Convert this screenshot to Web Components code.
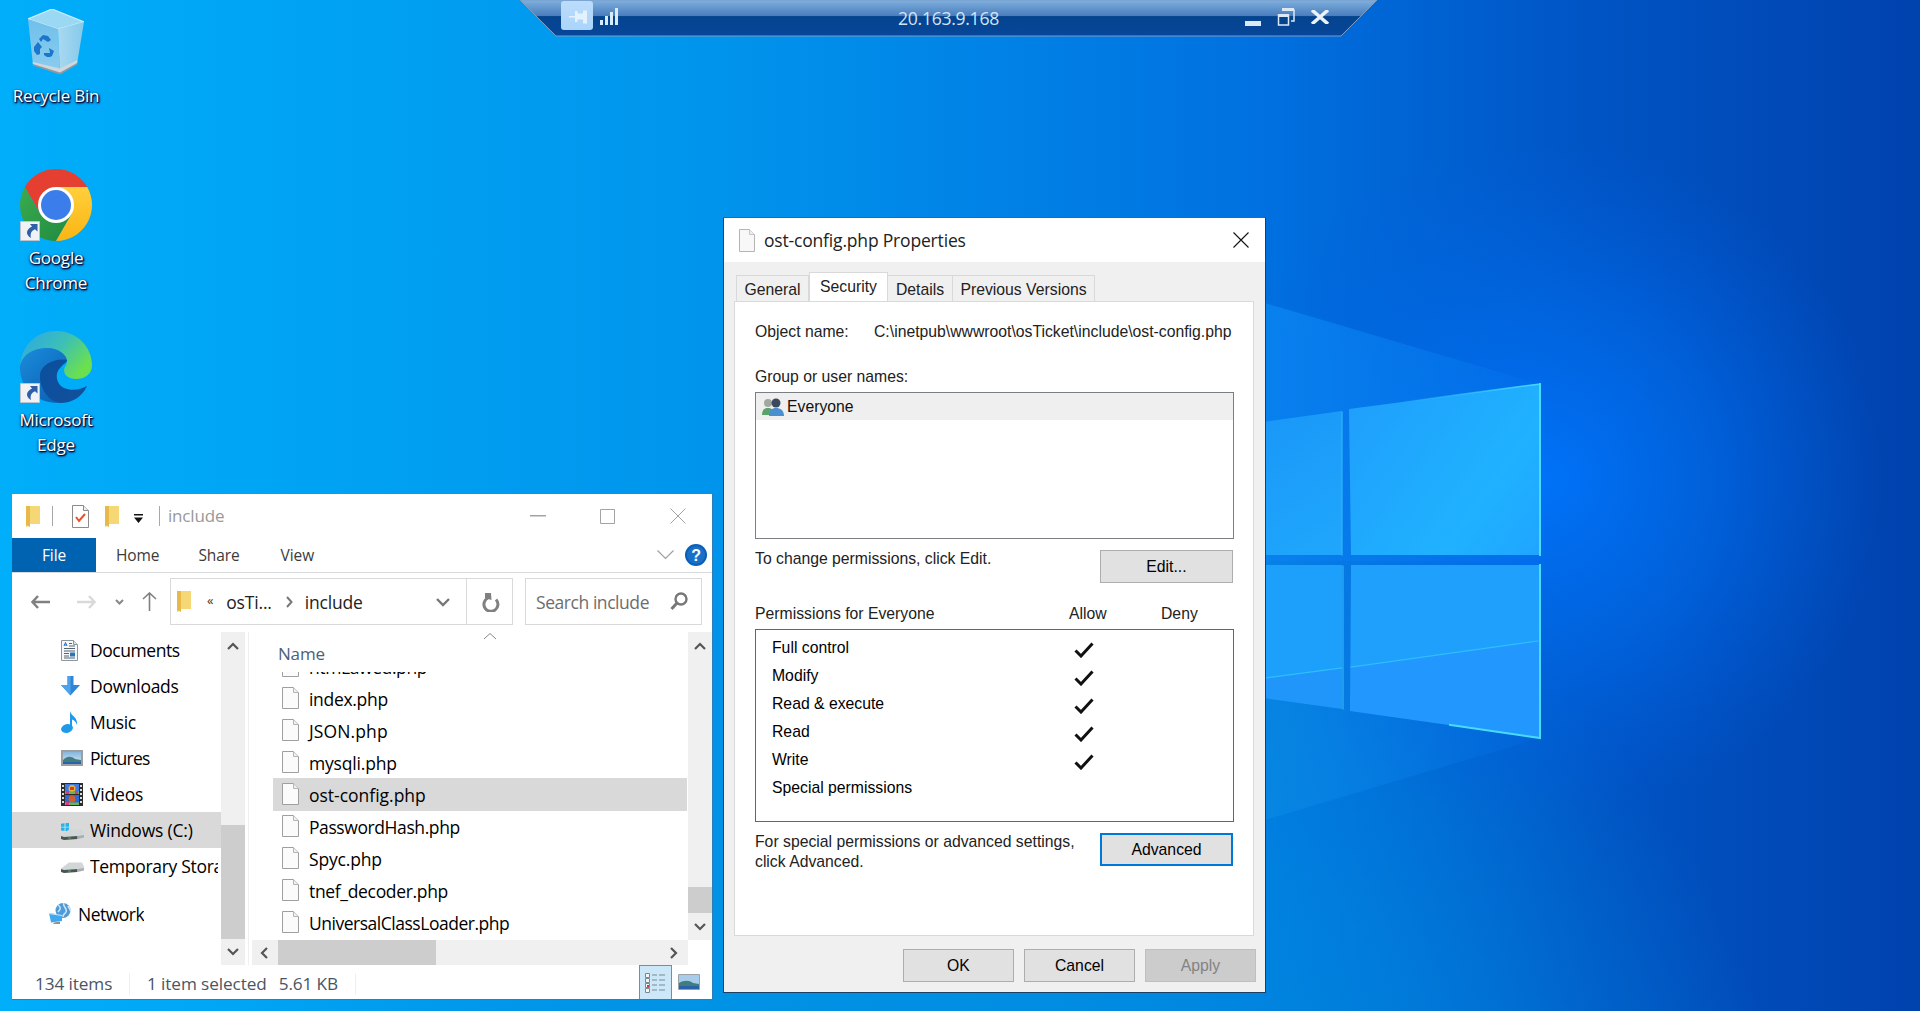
<!DOCTYPE html>
<html><head><meta charset="utf-8"><title>Remote desktop</title>
<style>
html,body{margin:0;padding:0;width:1920px;height:1011px;overflow:hidden;background:#0078d7}
</style></head><body>
<win-desktop>
  <desk-icons slot="icons">
    <desk-icon style="--mt:9px;--lm:8px;--ih:66px">
      <svg slot="icon" width="56" height="66" viewBox="0 0 56 66">
        <defs>
          <linearGradient id="rbl" x1="0" y1="0" x2="0" y2="1"><stop offset="0" stop-color="#6fc0ec"/><stop offset="1" stop-color="#8ccdee"/></linearGradient>
          <linearGradient id="rbr" x1="0" y1="0" x2="1" y2="0"><stop offset="0" stop-color="#a9d9f0"/><stop offset="1" stop-color="#85c9ec"/></linearGradient>
        </defs>
        <path d="M0 10L24 0L56 13L30 20Z" fill="#9ad8f3" stroke="#cdeffa" stroke-width="1.200"/>
        <path d="M0 10L30 20L32 65L5 56Z" fill="url(#rbl)"/>
        <path d="M30 20L56 13L49 55L32 65Z" fill="url(#rbr)"/>
        <path d="M4.700 53L32 59.500L49.300 51L49 55L32 65L5 56Z" fill="#cfd8de"/>
        <path d="M5 55L32 63.500L49 54L49 55.500L32 65.500L5 56.500Z" fill="#8f989e"/>
        <path d="M11 30L15 26L20 27L23 31L20 33L15 30L13 33ZM6 38L10 33L14 38L12 40L12 45L9 46L6 42ZM16 44L22 44L21 39L26 42L24 47L22 48L19 48L16 46Z" fill="#1c76cc"/>
      </svg>
      Recycle Bin
    </desk-icon>
    <desk-icon style="--mt:61px;--lm:4px;--ih:72px">
      <svg slot="icon" width="72" height="72" viewBox="0 0 72 72">
        <defs>
          <linearGradient id="cg" x1="0" y1="0" x2="1" y2="1"><stop offset="0" stop-color="#3cab4f"/><stop offset="1" stop-color="#1f8a3f"/></linearGradient>
          <linearGradient id="cy" x1="0" y1="0" x2="0" y2="1"><stop offset="0" stop-color="#ffcf3a"/><stop offset="1" stop-color="#fbb514"/></linearGradient>
        </defs>
        <path d="M67.180 18A36 36 0 0 0 4.820 18L20.410 45L36 18Z" fill="#e53f32"/>
        <path d="M4.820 18A36 36 0 0 0 36 72L51.590 45L20.410 45Z" fill="url(#cg)"/>
        <path d="M36 72A36 36 0 0 0 67.180 18L36 18L51.590 45Z" fill="url(#cy)"/>
        <circle cx="36" cy="36" r="18" fill="#fff"/><circle cx="36" cy="36" r="15" fill="#3b7dea"/>
      </svg>
      <shortcut-badge slot="icon"></shortcut-badge>
      Google<br>Chrome
    </desk-icon>
    <desk-icon style="--mt:36px;--lm:4px;--ih:72px">
      <svg slot="icon" width="72" height="72" viewBox="0 0 72 72">
        <defs>
          <linearGradient id="e1" x1="0" y1="0" x2="1" y2=".6"><stop offset="0" stop-color="#2ba6ea"/><stop offset=".55" stop-color="#3cc0b6"/><stop offset="1" stop-color="#6be04e"/></linearGradient>
          <linearGradient id="e2" x1="0" y1="0" x2=".8" y2="1"><stop offset="0" stop-color="#1b8cdc"/><stop offset="1" stop-color="#0b62b4"/></linearGradient>
          <linearGradient id="e3" x1="0" y1="0" x2="1" y2="1"><stop offset="0" stop-color="#0b4f9e"/><stop offset="1" stop-color="#11509c"/></linearGradient>
        </defs>
        <path d="M0 35C2 12 18 0 36 0C58 0 72 17 72 34C72 44 64 48 56 48C50 48 44 45 44 39C44 36 47 34 47 31C47 24 38 17 28 17C14 17 3 25 0 35Z" fill="url(#e1)"/>
        <path d="M0 35C3 22 15 17 28 17C38 17 47 24 47 30C38 28 28 33 26 42C24 53 28 66 38 72C16 72 -1 56 0 35Z" fill="url(#e2)"/>
        <path d="M47 29C36 27 21 33 20 44C19 58 30 71 40 72C52 72 62 66 67 55C60 59 52 60 44 57C36 53 34 42 41 36C43 33 47 32 47 29Z" fill="url(#e3)"/>
      </svg>
      <shortcut-badge slot="icon"></shortcut-badge>
      Microsoft<br>Edge
    </desk-icon>
  </desk-icons>

  <rdp-bar slot="bar">20.163.9.168</rdp-bar>

  <explorer-window slot="explorer">
    <nav-item slot="nav" style="--pad:49px;letter-spacing:-.45px">
      <svg slot="icon" width="17" height="21" viewBox="0 0 17 21"><path d="M.5.5h12l4 4v16H.5z" fill="#f6f8fb" stroke="#8d969f"/><path d="M12.500.5v4h4" fill="#dfe4e8" stroke="#8d969f"/><path d="M3 6l1.500-3.500L6 6M3.500 5h2" stroke="#1d6fc8" fill="none"/><path d="M8 3.500h3M8 6h6M3 8.500h11M3 11h11M3 13.500h5M3 16h5M3 18h11" stroke="#56656f"/><path d="M9 12.500h5v4H9z" fill="#2f72b5"/></svg>
      Documents
    </nav-item>
    <nav-item slot="nav" style="--pad:49px;letter-spacing:-.3px">
      <svg slot="icon" width="19" height="20" viewBox="0 0 19 20"><path d="M6.500 0h6v9H19l-9.500 10.500L0 9h6.500z" fill="#2f86d8"/><path d="M6.500 0h3v19.500L0 9h6.500z" fill="#4ea3ea"/></svg>
      Downloads
    </nav-item>
    <nav-item slot="nav" style="--pad:49px;letter-spacing:-.35px">
      <svg slot="icon" width="17" height="22" viewBox="0 0 17 22"><ellipse cx="6" cy="17.500" rx="6" ry="4.300" fill="#1d9aea" transform="rotate(-15 6 17.500)"/><path d="M9 17V0c1 5 8 6 7 14-1-3-2.500-4.500-5-5.500V17z" fill="#1d9aea"/></svg>
      Music
    </nav-item>
    <nav-item slot="nav" style="--pad:49px;letter-spacing:-.75px">
      <svg slot="icon" width="22" height="16" viewBox="0 0 22 16"><defs><linearGradient id="pc" x1="0" y1="0" x2="0" y2="1"><stop offset="0" stop-color="#7fb2dc"/><stop offset="1" stop-color="#e2edf5"/></linearGradient></defs><path d="M1 1h20v14H1z" fill="url(#pc)" stroke="#9aa0a5" stroke-width="2"/><path d="M2 10C6 6 10 6 14 9l6 1v3H2z" fill="#3f7d7e"/><path d="M2 12h18v2H2z" fill="#2a63a8"/></svg>
      Pictures
    </nav-item>
    <nav-item slot="nav" style="--pad:49px;letter-spacing:-.18px">
      <svg slot="icon" width="22" height="23" viewBox="0 0 22 23"><path d="M0 0h22v23H0z" fill="#2c2c2c"/><path d="M4 1h14v10H4z" fill="#3f7be0"/><path d="M4 12h14v10H4z" fill="#2b6ad6"/><circle cx="11" cy="5.500" r="3.500" fill="#e8b23a"/><path d="M9 4h4v3H9z" fill="#d33c2e"/><circle cx="11" cy="16" r="3.500" fill="#d35c2e"/><path d="M4 8.500h14V11H4zM4 19.500h14V22H4z" fill="#6fb356"/><path d="M5 8h3v3H5zM14 8h3v3h-3zM5 19h3v3H5z" fill="#d33c7e"/><path d="M1 2h2v2H1zM1 6h2v2H1zM1 10h2v2H1zM1 14h2v2H1zM1 18h2v2H1zM19 2h2v2h-2zM19 6h2v2h-2zM19 10h2v2h-2zM19 14h2v2h-2zM19 18h2v2h-2z" fill="#ddd"/></svg>
      Videos
    </nav-item>
    <nav-item slot="nav" selected style="--pad:49px;letter-spacing:-.18px">
      <svg slot="icon" style="margin-top:3px" width="23" height="17" viewBox="0 0 23 17"><path d="M0 .8l3.500-.5v3.500H0zM4.500.2 8-.3v4.100H4.500zM0 4.600h3.500v3.500L0 7.600zM4.500 4.600H8v4L4.500 8.100z" fill="#22b5ee"/><path d="M0 12.500l8-6h13l2 4v2L3 15 0 14z" fill="#d2d6d8"/><path d="M0 13l3 1 13.500-1v3L3 17l-3-1z" fill="#4d5256"/><path d="M16.500 13L23 12v2.500L16.500 16z" fill="#a9aeb2"/><path d="M7 14.500h3v1H7z" fill="#4cb04f"/></svg>
      Windows (C:)
    </nav-item>
    <nav-item slot="nav" style="--pad:49px;letter-spacing:-.3px">
      <svg slot="icon" style="margin-top:2px" width="23" height="11" viewBox="0 0 23 11"><path d="M0 6.500l8-6h13l2 4v2L3 9 0 8z" fill="#d2d6d8"/><path d="M0 7l3 1 13.500-1v3L3 11l-3-1z" fill="#4d5256"/><path d="M16.500 7L23 6v2.500L16.500 10z" fill="#a9aeb2"/><path d="M7 8.500h3v1H7z" fill="#4cb04f"/></svg>
      Temporary Storage (D:)
    </nav-item>
    <nav-item slot="nav" style="--pad:37px;--mt:12px;letter-spacing:-.5px">
      <svg slot="icon" width="22" height="22" viewBox="0 0 22 22"><circle cx="14" cy="7.500" r="7.500" fill="#4f9bd8"/><path d="M9 2c3 2 3 4 0 7M15 0c-2 3 4 6 2 9-1 2-3 2-3 5M19 3c1 3 3 3 2 5" fill="none" stroke="#cfe6f6" stroke-width="1.500"/><path d="M0 10l13 2v6L2 19.500z" fill="#42a8ee"/><path d="M0 10l13 2v1L0 11z" fill="#cfe7f7"/><path d="M5 19.500l6-1v2.500H4z" fill="#8d9499"/></svg>
      Network
    </nav-item>
    <file-row slot="files" style="letter-spacing:-.4px">htmLawed.php</file-row>
    <file-row slot="files" style="letter-spacing:-.31px">index.php</file-row>
    <file-row slot="files" style="letter-spacing:.12px">JSON.php</file-row>
    <file-row slot="files" style="letter-spacing:-.18px">mysqli.php</file-row>
    <file-row slot="files" selected style="letter-spacing:-.01px">ost-config.php</file-row>
    <file-row slot="files" style="letter-spacing:-.41px">PasswordHash.php</file-row>
    <file-row slot="files" style="letter-spacing:-.18px">Spyc.php</file-row>
    <file-row slot="files" style="letter-spacing:-.33px">tnef_decoder.php</file-row>
    <file-row slot="files" style="letter-spacing:-.48px">UniversalClassLoader.php</file-row>
  </explorer-window>

  <props-dialog slot="dialog">
    <perm-row slot="perms" allow>Full control</perm-row>
    <perm-row slot="perms" allow>Modify</perm-row>
    <perm-row slot="perms" allow>Read &amp; execute</perm-row>
    <perm-row slot="perms" allow>Read</perm-row>
    <perm-row slot="perms" allow>Write</perm-row>
    <perm-row slot="perms">Special permissions</perm-row>
  </props-dialog>
</win-desktop>

<script>
const define=(name,html)=>customElements.define(name,class extends HTMLElement{
  connectedCallback(){ if(!this.shadowRoot){ this.attachShadow({mode:'open'}).innerHTML=html; } }
});

define('win-desktop',`<style>
:host{display:block;position:relative;width:1920px;height:1011px;overflow:hidden}
.wall{position:absolute;inset:0;display:block}
::slotted([slot=icons]){position:absolute;left:8px;top:0}
::slotted([slot=bar]){position:absolute;left:520px;top:0}
::slotted([slot=explorer]){position:absolute;left:12px;top:494px}
::slotted([slot=dialog]){position:absolute;left:723px;top:217px}
</style>
<svg class="wall" width="1920" height="1011" viewBox="0 0 1920 1011">
<defs>
<linearGradient id="base" x1="0" y1="0" x2="1920" y2="0" gradientUnits="userSpaceOnUse">
<stop offset="0" stop-color="#00aefa"/><stop offset=".375" stop-color="#0094ec"/><stop offset=".66" stop-color="#0070e0"/><stop offset=".83" stop-color="#0054c4"/><stop offset="1" stop-color="#0042ae"/></linearGradient>
<radialGradient id="bot" cx="1000" cy="1250" r="800" gradientUnits="userSpaceOnUse"><stop offset="0" stop-color="#0098e0" stop-opacity=".85"/><stop offset=".6" stop-color="#0090e0" stop-opacity=".5"/><stop offset="1" stop-color="#0090e0" stop-opacity="0"/></radialGradient>
<radialGradient id="glow" cx="1545" cy="480" r="340" gradientUnits="userSpaceOnUse"><stop offset="0" stop-color="#0072f8"/><stop offset=".5" stop-color="#006cec" stop-opacity=".6"/><stop offset="1" stop-color="#0060e0" stop-opacity="0"/></radialGradient>
<linearGradient id="beamT" x1="1540" y1="384" x2="1100" y2="384" gradientUnits="userSpaceOnUse"><stop offset="0" stop-color="#0a84f4" stop-opacity=".1"/><stop offset=".5" stop-color="#0a84f2" stop-opacity=".7"/><stop offset="1" stop-color="#0a8cf0"/></linearGradient>
<linearGradient id="beamB" x1="1540" y1="738" x2="1200" y2="738" gradientUnits="userSpaceOnUse"><stop offset="0" stop-color="#0a7aee" stop-opacity=".1"/><stop offset=".6" stop-color="#0a86e6" stop-opacity=".55"/><stop offset="1" stop-color="#0a8ce0" stop-opacity=".8"/></linearGradient>
<linearGradient id="pane" x1="1350" y1="400" x2="1540" y2="540" gradientUnits="userSpaceOnUse"><stop offset="0" stop-color="#1f9ffc"/><stop offset=".7" stop-color="#1fb2ff"/><stop offset="1" stop-color="#20a6ff"/></linearGradient>
<linearGradient id="paneL" x1="1265" y1="420" x2="1342" y2="540" gradientUnits="userSpaceOnUse"><stop offset="0" stop-color="#1a98f8"/><stop offset="1" stop-color="#1fa6fc"/></linearGradient>
<linearGradient id="topEdge" x1="1400" y1="0" x2="1540" y2="0" gradientUnits="userSpaceOnUse"><stop offset="0" stop-color="#48d8fc" stop-opacity="0"/><stop offset="1" stop-color="#48d8fc"/></linearGradient>
</defs>
<rect width="1920" height="1011" fill="url(#base)"/>
<rect width="1920" height="1011" fill="url(#bot)"/>
<rect width="1920" height="1011" fill="url(#glow)"/>
<path d="M1540 384L1000 225V561H1540Z" fill="url(#beamT)"/>
<path d="M1540 561V738L1000 899V561Z" fill="url(#beamB)"/>
<path d="M1349 409L1540 384V555H1351Z" fill="url(#pane)"/>
<path d="M1351 565H1540V738L1350 711Z" fill="#2298ff"/>
<path d="M1351 565H1540V641L1351 667Z" fill="#1fa0fd"/>
<path d="M1100 445L1342 411V555H1100Z" fill="url(#paneL)"/>
<path d="M1100 565H1342V709L1100 675Z" fill="#2096fb"/>
<path d="M1100 565H1342V668L1100 700Z" fill="#1ca0fb"/>
<g fill="none" stroke-linecap="square">
<path d="M1400 402.300L1540 384" stroke="url(#topEdge)" stroke-width="1.500"/>
<path d="M1540 384V555M1540 565V738L1450 725" stroke="#48dcfc" stroke-width="2"/>
<path d="M1351 667L1538 641M1342 668L1265 678" stroke="#2fbffb" stroke-width="1.200"/>
<path d="M1342 412V555M1343 566V709" stroke="#30b4fb" stroke-width="1.200"/>
</g>
</svg><slot name="icons"></slot><slot name="bar"></slot><slot name="explorer"></slot><slot name="dialog"></slot>`);

define('desk-icons',`<style>:host{display:flex;flex-direction:column;width:96px}</style><slot></slot>`);

define('desk-icon',`<style>
:host{display:flex;flex-direction:column;align-items:center;width:96px;margin-top:var(--mt);
font:400 17px/25px "Open Sans",sans-serif;letter-spacing:-.2px;color:#fff;text-align:center;text-shadow:1px 1px 2px #003,0 1px 3px #002060,1px 1px 1px #001a40}
.i{position:relative;display:block;height:var(--ih);margin-bottom:var(--lm)}
</style><div class="i"><slot name="icon"></slot></div><div><slot></slot></div>`);

define('shortcut-badge',`<style>
:host{position:absolute;left:0;bottom:0;width:20px;height:20px;display:block}
svg{display:block}
</style><svg width="20" height="20" viewBox="0 0 20 20"><path d="M.5.5h19v19H.5z" fill="#f0f3f6" stroke="#bcc4cc"/><path d="M10 3h7.500v7.500L15 8.300C11 10 10 13 11 17 5.500 14 5.500 8.500 12 5.500z" fill="#2f5fa8"/></svg>`);

define('rdp-bar',`<style>
:host{display:block;width:857px;height:37px;position:relative;font:400 17.600px/37px "Open Sans",sans-serif;letter-spacing:-.3px;color:#d4e4f4}
svg.bg{position:absolute;inset:0}
.row{position:relative;display:grid;grid-template-columns:1fr auto 1fr;height:36px;padding:0 41px}
.l{display:flex;gap:7px;align-items:flex-start}
.pin{width:32px;height:29px;margin-top:1px;border-radius:3px;background:linear-gradient(#bcdcfb,#aad4fa);display:flex}
.r{display:flex;justify-content:flex-end;gap:16px;align-items:flex-start;padding-right:7px;position:relative}
.t{line-height:36px;display:block}
.r svg{display:block}
</style>
<svg class="bg" width="857" height="37" viewBox="0 0 857 37"><defs><linearGradient id="b" x1="0" y1="0" x2="0" y2="36" gradientUnits="userSpaceOnUse"><stop offset="0" stop-color="#7fb0e0"/><stop offset=".44" stop-color="#4a7dbc"/><stop offset=".46" stop-color="#04448e"/><stop offset="1" stop-color="#07469a"/></linearGradient></defs>
<path d="M0 0H857L821 36H36Z" fill="url(#b)" stroke="#7d9cc4" stroke-width="1"/></svg>
<div class="row"><div class="l"><div class="pin"><svg style="display:block" width="32" height="29" viewBox="0 0 32 29"><path d="M8 15h8v1.500H8zM14 10h2.500v11H14zM16 12.500h6v6h-6zM22 9.500h4v13h-4z" fill="#e4f2ff"/></svg></div>
<svg style="margin-top:8px" width="18" height="17" viewBox="0 0 18 17"><path d="M0 12h3v5H0zM5 8h3v9H5zM10 4h3v13h-3zM15 0h3v17h-3z" fill="#d7ecff"/></svg></div>
<div class="t"><slot></slot></div>
<div class="r"><svg style="margin-top:21px" width="16" height="5" viewBox="0 0 16 5"><path d="M0 0h16v5H0z" fill="#dce9f5"/></svg>
<svg style="margin-top:7px" width="18" height="19" viewBox="0 0 18 19"><path d="M1.500 8h10v10h-10z" fill="#04448e" stroke="#dce9f5" stroke-width="1.500"/><path d="M5 3h12v11h-3" fill="none" stroke="#dce9f5" stroke-width="1.500"/><path d="M5 1h12v3H5zM1 7h11v3H1z" fill="#dce9f5"/></svg>
<svg style="margin-top:10px" width="18" height="14" viewBox="0 0 18 14"><path d="M1 0l8 7 8-7M1 14l8-7 8 7" fill="none" stroke="#eaf2fa" stroke-width="3.500"/></svg></div></div>`);

define('explorer-window',`<style>
:host{display:flex;flex-direction:column;width:701px;height:506px;box-sizing:border-box;background:#fff;border-right:1px solid #2b7fb8;border-bottom:1px solid #2b7fb8;font:400 17px/22px "Open Sans",sans-serif;letter-spacing:-.18px;color:#000}
.title{height:44px;display:flex;align-items:center;position:relative;padding-left:14px;color:#999}
.title svg{display:block;flex:none}
.sep{width:1px;height:20px;background:#a8a8a8;flex:none}
.wc{margin-left:auto;display:flex;align-items:center;padding-right:26px}
.tabs{height:34px;display:flex;align-items:center;border-bottom:1px solid #dadbdc;font-size:15.500px;color:#3b3b3b;letter-spacing:-.1px}
.file{width:84px;height:34px;background:#0063b1;color:#fff;display:flex;align-items:center;justify-content:center;margin-right:20px}
.tabs span{margin-right:41px}
.tabs span:first-of-type{margin-right:39px}
.tabs .end{margin-left:auto;display:flex;align-items:center;gap:11px;padding-right:5px}
.navrow{height:59px;box-sizing:border-box;padding-top:5px;display:flex;align-items:flex-start;position:relative;font-size:17.500px}
.navbtns{width:158px;height:47px;display:flex;align-items:center;position:relative;flex:none}
.addr{width:343px;height:47px;box-sizing:border-box;border:1px solid #d9d9d9;display:flex;align-items:center;flex:none;color:#222;position:relative}
.srch{width:177px;height:47px;box-sizing:border-box;border:1px solid #d9d9d9;margin-left:12px;display:flex;align-items:center;color:#6d6d6d;padding-left:10px;flex:none;letter-spacing:-.44px}
.content{height:333px;display:flex}
.navp{width:209px;overflow:hidden;white-space:nowrap;flex:none}
.bar{width:24px;flex:none;background:#f0f0f0;position:relative;display:flex;flex-direction:column;justify-content:space-between}
.arrow{height:27px;display:flex;align-items:center;justify-content:center}
.thumb{position:absolute;left:0;right:0;background:#cdcdcd}
.gut{width:7px;flex:none;background:linear-gradient(90deg,#fff 3px,#f0f0f0 3px,#f0f0f0 4px,#fff 4px)}
.fp{flex:1;display:grid;grid-template-columns:436px 24px;grid-template-rows:1fr 25px;min-width:0}
.list{overflow:hidden;position:relative;display:flex;flex-direction:column}
.hdr{height:40px;flex:none;box-sizing:border-box;padding:11px 0 0 26px;color:#4c607a;font-size:17px;position:relative;background:#fff}
.hdr svg{position:absolute;left:231px;top:0}
.rows{flex:1;overflow:hidden;padding-left:21px}
.inner{margin-top:-22px}
.hs{background:#f0f0f0;position:relative;display:flex;justify-content:space-between;align-items:center;padding:0 8px}
.status{flex:1;display:flex;align-items:center;color:#4a5563;font-size:17.200px;letter-spacing:-.1px;position:relative;padding-top:3px;box-sizing:border-box}
.status b{font-weight:400}
.vsep{width:1px;height:22px;background:#f0f0f0;flex:none}
.views{margin-left:auto;display:flex;align-self:stretch;align-items:center;padding-right:12px;margin-top:-3px}
.sel{width:33px;align-self:stretch;box-sizing:border-box;background:#cce8f8;border:1px solid #3fa0d8;border-bottom:0;display:flex;align-items:center;justify-content:center;margin-right:6px}
svg{display:block;flex:none}
</style>
<div class="title">
<svg width="14" height="21" viewBox="0 0 14 21"><path d="M0 0h14v18H3l-2 3H0z" fill="#f6d776"/><path d="M0 0h4v21L0 19z" fill="#e7b94a"/></svg>
<div class="sep" style="margin-left:12px"></div>
<svg style="margin-left:19px" width="17" height="23" viewBox="0 0 17 23"><path d="M.5.5h11l5 5v17H.5z" fill="#fff" stroke="#8b8b8b"/><path d="M11.500.5v5h5" fill="#eee" stroke="#8b8b8b"/><path d="M4 12l3 4 6-7" fill="none" stroke="#e8502a" stroke-width="2"/></svg>
<svg style="margin-left:16px" width="14" height="21" viewBox="0 0 14 21"><path d="M0 0h14v18H3l-2 3H0z" fill="#f6d776"/><path d="M0 0h4v21L0 19z" fill="#e7b94a"/></svg>
<svg style="margin-left:15px;margin-top:4px" width="9" height="9" viewBox="0 0 9 9"><path d="M0 0h9v1.500H0zM0 3.500h9L4.500 9z" fill="#111"/></svg>
<div class="sep" style="margin-left:16px;height:20px"></div>
<span style="margin-left:8px">include</span>
<div class="wc">
<svg style="margin-right:54px" width="16" height="2" viewBox="0 0 16 2"><path d="M0 0h16v1.500H0z" fill="#a3a3a3"/></svg>
<svg style="margin-right:55px" width="15" height="15" viewBox="0 0 15 15"><path d="M.5.5h14v14H.5z" fill="none" stroke="#a3a3a3"/></svg>
<svg width="16" height="16" viewBox="0 0 16 16"><path d="M.5.5l15 15M15.500.5l-15 15" stroke="#a3a3a3" fill="none"/></svg>
</div></div>
<div class="tabs"><div class="file">File</div><span>Home</span><span>Share</span><span>View</span>
<div class="end"><svg width="17" height="10" viewBox="0 0 17 10"><path d="M.5.5l8 8 8-8" fill="none" stroke="#a0a0a0" stroke-width="1.200"/></svg>
<svg width="22" height="22" viewBox="0 0 22 22"><circle cx="11" cy="11" r="11" fill="#0a5fb6"/><circle cx="11" cy="11" r="9" fill="#1a6fc8"/><text x="11" y="17" text-anchor="middle" font-family="Liberation Sans" font-weight="700" font-size="16" fill="#fff">?</text></svg></div></div>
<div class="navrow">
<div class="navbtns">
<svg style="margin-left:19px" width="19" height="14" viewBox="0 0 19 14"><path d="M7 1L1.500 7 7 13M2 7h17" fill="none" stroke="#808080" stroke-width="2.500"/></svg>
<svg style="margin-left:27px" width="19" height="14" viewBox="0 0 19 14"><path d="M12 1l5.500 6L12 13M17 7H0" fill="none" stroke="#d9d9d9" stroke-width="2.500"/></svg>
<svg style="margin-left:19px" width="9" height="6" viewBox="0 0 9 6"><path d="M1 1l3.500 3.500L8 1" fill="none" stroke="#888" stroke-width="2"/></svg>
<svg style="margin-left:18px" width="15" height="19" viewBox="0 0 15 19"><path d="M1 7l6.500-6L14 7M7.500 1v18" fill="none" stroke="#808080" stroke-width="1.600"/></svg>
</div>
<div class="addr">
<svg style="margin-left:6px" width="14" height="21" viewBox="0 0 14 21"><path d="M0 0h14v18H3l-2 3H0z" fill="#f6d776"/><path d="M0 0h4v21L0 19z" fill="#e7b94a"/></svg>
<span style="margin-left:16px;font-size:13px;line-height:16px;position:relative;top:-2px;color:#333">«</span>
<span style="margin-left:13px">osTi...</span>
<svg style="margin-left:14px" width="7" height="12" viewBox="0 0 7 12"><path d="M1 1l4.500 5L1 11" fill="none" stroke="#777" stroke-width="2"/></svg>
<span style="margin-left:12px">include</span>
<svg style="position:absolute;left:265px;top:19px" width="14" height="9" viewBox="0 0 14 9"><path d="M1 1l6 6 6-6" fill="none" stroke="#777" stroke-width="2.400"/></svg>
<div style="position:absolute;left:295px;top:0;bottom:0;width:1px;background:#d9d9d9"></div>
<svg style="position:absolute;left:311px;top:14px" width="18" height="19" viewBox="0 0 18 19"><path d="M13.500 5.500a7 7 0 1 1-8-1.500" fill="none" stroke="#808080" stroke-width="3" transform="translate(.5 1)"/><path d="M3 0h6l.500 7L3 5z" fill="#808080"/></svg>
</div>
<div class="srch"><span>Search include</span>
<svg style="margin-left:auto;margin-right:13px" width="18" height="19" viewBox="0 0 18 19"><circle cx="11" cy="7" r="5.500" fill="none" stroke="#777" stroke-width="2.400"/><path d="M7 11L1.500 17" stroke="#777" stroke-width="3"/></svg></div>
</div>
<div class="content">
<div class="navp"><slot name="nav"></slot></div>
<div class="bar"><div class="thumb" style="top:193px;height:114px"></div>
<div class="arrow" style="position:relative"><svg width="12" height="8" viewBox="0 0 12 8"><path d="M1 7l5-5 5 5" fill="none" stroke="#555" stroke-width="2.200"/></svg></div>
<div class="arrow" style="position:relative"><svg width="12" height="8" viewBox="0 0 12 8"><path d="M1 1l5 5 5-5" fill="none" stroke="#555" stroke-width="2.200"/></svg></div></div>
<div class="gut"></div>
<div class="fp">
<div class="list">
<div class="hdr">Name<svg width="14" height="8" viewBox="0 0 14 8"><path d="M1 7l6-5.500L13 7" fill="none" stroke="#888"/></svg></div>
<div class="rows"><div class="inner"><slot name="files"></slot></div></div>
</div>
<div class="bar" style="width:24px"><div class="thumb" style="top:255px;height:26px"></div>
<div class="arrow" style="position:relative"><svg width="12" height="8" viewBox="0 0 12 8"><path d="M1 7l5-5 5 5" fill="none" stroke="#555" stroke-width="2.200"/></svg></div>
<div class="arrow" style="position:relative;margin-bottom:0"><svg width="12" height="8" viewBox="0 0 12 8"><path d="M1 1l5 5 5-5" fill="none" stroke="#555" stroke-width="2.200"/></svg></div></div>
<div class="hs"><div class="thumb" style="left:26px;right:auto;top:0;bottom:0;width:158px"></div>
<svg style="position:relative" width="8" height="12" viewBox="0 0 8 12"><path d="M7 1L2 6l5 5" fill="none" stroke="#555" stroke-width="2.200"/></svg>
<svg style="position:relative;margin-right:2px" width="8" height="12" viewBox="0 0 8 12"><path d="M1 1l5 5-5 5" fill="none" stroke="#555" stroke-width="2.200"/></svg></div>
<div></div>
</div></div>
<div class="status"><span style="margin-left:23px;width:94px">134 items</span><div class="vsep"></div><span style="margin-left:17px">1 item selected</span><span style="margin-left:12px">5.61 KB</span><div class="vsep" style="margin-left:17px"></div>
<div class="views"><div class="sel"><svg width="21" height="20" viewBox="0 0 21 20"><g fill="#f4f6f8" stroke="#7d8792"><path d="M.5.5h4v4h-4zM.5 5.500h4v4h-4zM.5 10.500h4v4h-4zM.5 15.500h4v4h-4z"/></g><path d="M2 12h2v2H2z" fill="#d33"/><path d="M7 2h5M14 2h6M7 7h5M14 7h6M7 12h5M14 12h6M7 17h5M14 17h6" stroke="#7d8792"/></svg></div>
<svg width="22" height="16" viewBox="0 0 22 16"><path d="M.5.5h21v15H.5z" fill="#a8cdea" stroke="#9aa2a8"/><path d="M1 9c5-3 10-3 14 0l6 1v3H1z" fill="#3f7d7e"/><path d="M1 12h20v3H1z" fill="#2a63a8"/></svg></div></div>`);

define('nav-item',`<style>
:host{display:flex;align-items:center;height:36px;padding-left:var(--pad);margin-top:var(--mt,0);font-size:17.500px}
:host([selected]){background:#d9d9d9}
.i{width:29px;flex:none;display:flex;align-items:center}
span{display:block;max-width:128px;overflow:hidden}
</style><div class="i"><slot name="icon"></slot></div><span><slot></slot></span>`);

define('file-row',`<style>
:host{display:flex;align-items:center;height:32px;font-size:17.500px;padding-left:9px;width:414px;box-sizing:border-box;padding-top:2px}
:host([selected]){background:#d9d9d9;box-shadow:0 1px 0 #d9d9d9}
svg{display:block;flex:none;margin-right:10px;margin-top:-2px}
</style><svg width="17" height="22" viewBox="0 0 17 22"><path d="M.5.5h11l5 5v16H.5z" fill="#fbfbfb" stroke="#9f9f9f"/><path d="M11.500.5v5h5" fill="#efefef" stroke="#b5b5b5"/></svg><span><slot></slot></span>`);

define('win-button',`<style>
:host{display:inline-flex;align-items:center;justify-content:center;box-sizing:border-box;width:var(--w,133px);height:33px;background:#e1e1e1;border:1px solid #adadad;color:#000}
:host([primary]){border:2px solid #0078d7}
:host([disabled]){background:#ccc;border-color:#bfbfbf;color:#838383}
</style><slot></slot>`);

define('perm-row',`<style>
:host{display:grid;grid-template-columns:302px 20px;align-items:center;height:28px;padding-left:16px}
svg{display:none}
:host([allow]) svg{display:block;margin-top:4px}
</style><span><slot></slot></span><svg width="20" height="16" viewBox="0 0 20 16"><path d="M1.500 8.500l5.500 5.500L18.500 1.500" fill="none" stroke="#111" stroke-width="3"/></svg>`);

define('props-dialog',`<style>
:host{display:flex;flex-direction:column;width:543px;height:776px;box-sizing:border-box;background:#f0f0f0;border:1px solid #1d3f63;border-top-color:#1d6eb0;font:400 15.750px/20px "Liberation Sans",Arial,sans-serif;color:#000}
svg{display:block;flex:none}
.title{height:44px;background:#fff;display:flex;align-items:center;flex:none;font:400 17.500px/24px "Open Sans",sans-serif;letter-spacing:-.18px;color:#222}
.tabs{height:39px;flex:none;display:flex;align-items:flex-end;padding-left:12px}
.tab{height:26px;box-sizing:border-box;border:1px solid #d9d9d9;border-bottom:0;border-left-width:0;display:flex;align-items:center;justify-content:center;color:#222;padding-top:3px}
.tab.a{height:29px;background:#fff;padding-top:0;padding-bottom:1px}
.panel{margin:0 0 0 10px;width:520px;height:635px;box-sizing:border-box;background:#fff;border:1px solid #d9d9d9;padding:20px 19px 0 20px;flex:none;display:flex;flex-direction:column}
.obj{display:flex;color:#222}
.obj span:first-child{width:119px}
.lab{margin-top:25px;color:#222}
.lb{margin-top:5px;height:147px;box-sizing:border-box;border:1px solid #7a7f86}
.lbrow{height:27px;background:#efefef;display:flex;align-items:center;padding-left:6px;gap:3px;color:#111}
.chg{margin-top:10px;display:flex;justify-content:space-between;color:#222;align-items:flex-start;padding-right:1px}
.chg win-button,.adv win-button{margin-top:1px}
.ph{margin-top:21px;display:grid;grid-template-columns:314px 92px auto;height:20px;color:#222}
.pb{margin-top:5px;height:193px;box-sizing:border-box;border:1px solid #62666b;padding-top:4px}
.adv{margin-top:10px;display:flex;justify-content:space-between;align-items:flex-start;padding-right:1px;color:#222}
.foot{flex:1;display:flex;justify-content:flex-end;gap:10px;padding:13px 9px 0 0}
.x{margin-left:auto;margin-right:16px}
</style>
<div class="title"><svg style="margin-left:15px;margin-right:9px" width="16" height="23" viewBox="0 0 16 23"><path d="M.5.5h10l5 5v17H.5z" fill="#f8f8f8" stroke="#b4b4b4"/><path d="M10.500.5v5h5" fill="#eee" stroke="#c4c4c4"/></svg>ost-config.php Properties
<svg class="x" width="16" height="16" viewBox="0 0 16 16"><path d="M.5.5l15 15M15.500.5l-15 15" stroke="#111" fill="none" stroke-width="1.100"/></svg></div>
<div class="tabs">
<div class="tab" style="width:73px;border-left-width:1px">General</div>
<div class="tab a" style="width:79px;border-left-width:1px">Security</div>
<div class="tab" style="width:65px">Details</div>
<div class="tab" style="width:142px">Previous Versions</div>
</div>
<div class="panel">
<div class="obj"><span>Object name:</span><span>C:\\inetpub\\wwwroot\\osTicket\\include\\ost-config.php</span></div>
<div class="lab">Group or user names:</div>
<div class="lb"><div class="lbrow"><svg width="22" height="18" viewBox="0 0 22 18"><circle cx="6" cy="5" r="4" fill="#a3a79f"/><path d="M0 17c0-6 3-7 6-7s6 1 6 7z" fill="#5aa26b"/><circle cx="14" cy="5" r="4.500" fill="#3a4a5c"/><path d="M7 18c0-6 3-8 7-8s8 2 8 8z" fill="#4a90d0"/></svg>Everyone</div></div>
<div class="chg"><div>To change permissions, click Edit.</div><win-button>Edit...</win-button></div>
<div class="ph"><span>Permissions for Everyone</span><span>Allow</span><span>Deny</span></div>
<div class="pb"><slot name="perms"></slot></div>
<div class="adv"><div>For special permissions or advanced settings,<br>click Advanced.</div><win-button primary>Advanced</win-button></div>
</div>
<div class="foot"><win-button style="--w:111px">OK</win-button><win-button style="--w:111px">Cancel</win-button><win-button style="--w:111px" disabled>Apply</win-button></div>`);
</script>
</body></html>
